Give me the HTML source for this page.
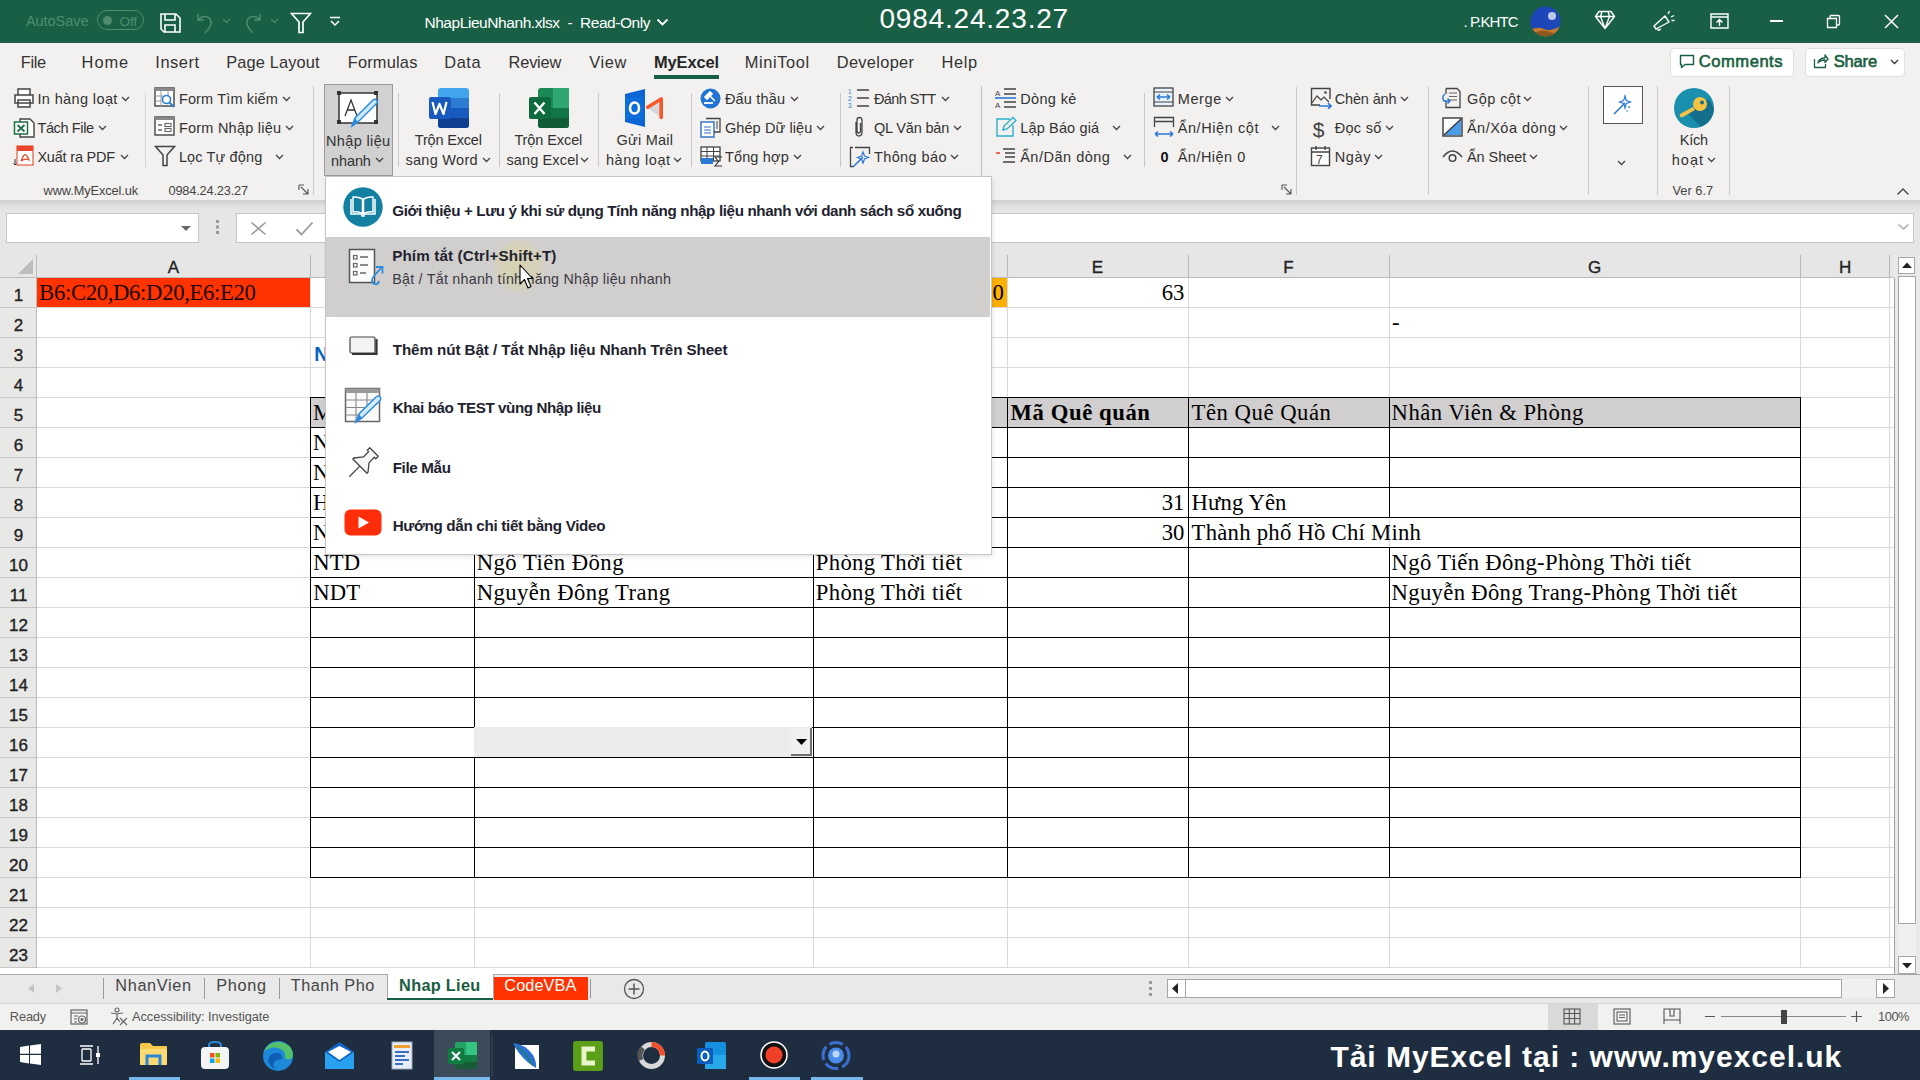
<!DOCTYPE html><html><head><meta charset="utf-8"><style>
html,body{margin:0;padding:0;width:1920px;height:1080px;overflow:hidden;background:#fff;}
body>div,body>svg{position:absolute;}
</style></head><body>
<div style="left:0px;top:0px;width:1920px;height:43px;background:#185f45;"></div>
<div style="left:0px;top:43px;width:1920px;height:157px;background:#f2f1ef;"></div>
<div style="left:0px;top:200px;width:1920px;height:55px;background:#e6e6e6;"></div>
<div style="left:0px;top:200px;width:1920px;height:11px;background:linear-gradient(#d0d0d0,#e2e2e2 60%,#e6e6e6);"></div>
<div style="left:0px;top:255px;width:1894px;height:22px;background:#e6e6e6;"></div>
<div style="left:0px;top:278px;width:36px;height:690px;background:#e8e8e7;"></div>
<div style="left:37px;top:278px;width:1857px;height:690px;background:#fff;"></div>
<div style="left:37px;top:307px;width:1857px;height:1px;background:#d9d9d9"></div>
<div style="left:0px;top:307px;width:36px;height:1px;background:#c8c8c8"></div>
<div style="left:37px;top:337px;width:1857px;height:1px;background:#d9d9d9"></div>
<div style="left:0px;top:337px;width:36px;height:1px;background:#c8c8c8"></div>
<div style="left:37px;top:367px;width:1857px;height:1px;background:#d9d9d9"></div>
<div style="left:0px;top:367px;width:36px;height:1px;background:#c8c8c8"></div>
<div style="left:37px;top:397px;width:1857px;height:1px;background:#d9d9d9"></div>
<div style="left:0px;top:397px;width:36px;height:1px;background:#c8c8c8"></div>
<div style="left:37px;top:427px;width:1857px;height:1px;background:#d9d9d9"></div>
<div style="left:0px;top:427px;width:36px;height:1px;background:#c8c8c8"></div>
<div style="left:37px;top:457px;width:1857px;height:1px;background:#d9d9d9"></div>
<div style="left:0px;top:457px;width:36px;height:1px;background:#c8c8c8"></div>
<div style="left:37px;top:487px;width:1857px;height:1px;background:#d9d9d9"></div>
<div style="left:0px;top:487px;width:36px;height:1px;background:#c8c8c8"></div>
<div style="left:37px;top:517px;width:1857px;height:1px;background:#d9d9d9"></div>
<div style="left:0px;top:517px;width:36px;height:1px;background:#c8c8c8"></div>
<div style="left:37px;top:547px;width:1857px;height:1px;background:#d9d9d9"></div>
<div style="left:0px;top:547px;width:36px;height:1px;background:#c8c8c8"></div>
<div style="left:37px;top:577px;width:1857px;height:1px;background:#d9d9d9"></div>
<div style="left:0px;top:577px;width:36px;height:1px;background:#c8c8c8"></div>
<div style="left:37px;top:607px;width:1857px;height:1px;background:#d9d9d9"></div>
<div style="left:0px;top:607px;width:36px;height:1px;background:#c8c8c8"></div>
<div style="left:37px;top:637px;width:1857px;height:1px;background:#d9d9d9"></div>
<div style="left:0px;top:637px;width:36px;height:1px;background:#c8c8c8"></div>
<div style="left:37px;top:667px;width:1857px;height:1px;background:#d9d9d9"></div>
<div style="left:0px;top:667px;width:36px;height:1px;background:#c8c8c8"></div>
<div style="left:37px;top:697px;width:1857px;height:1px;background:#d9d9d9"></div>
<div style="left:0px;top:697px;width:36px;height:1px;background:#c8c8c8"></div>
<div style="left:37px;top:727px;width:1857px;height:1px;background:#d9d9d9"></div>
<div style="left:0px;top:727px;width:36px;height:1px;background:#c8c8c8"></div>
<div style="left:37px;top:757px;width:1857px;height:1px;background:#d9d9d9"></div>
<div style="left:0px;top:757px;width:36px;height:1px;background:#c8c8c8"></div>
<div style="left:37px;top:787px;width:1857px;height:1px;background:#d9d9d9"></div>
<div style="left:0px;top:787px;width:36px;height:1px;background:#c8c8c8"></div>
<div style="left:37px;top:817px;width:1857px;height:1px;background:#d9d9d9"></div>
<div style="left:0px;top:817px;width:36px;height:1px;background:#c8c8c8"></div>
<div style="left:37px;top:847px;width:1857px;height:1px;background:#d9d9d9"></div>
<div style="left:0px;top:847px;width:36px;height:1px;background:#c8c8c8"></div>
<div style="left:37px;top:877px;width:1857px;height:1px;background:#d9d9d9"></div>
<div style="left:0px;top:877px;width:36px;height:1px;background:#c8c8c8"></div>
<div style="left:37px;top:907px;width:1857px;height:1px;background:#d9d9d9"></div>
<div style="left:0px;top:907px;width:36px;height:1px;background:#c8c8c8"></div>
<div style="left:37px;top:937px;width:1857px;height:1px;background:#d9d9d9"></div>
<div style="left:0px;top:937px;width:36px;height:1px;background:#c8c8c8"></div>
<div style="left:37px;top:967px;width:1857px;height:1px;background:#d9d9d9"></div>
<div style="left:0px;top:967px;width:36px;height:1px;background:#c8c8c8"></div>
<div style="left:310px;top:278px;width:1px;height:690px;background:#d9d9d9"></div>
<div style="left:474px;top:278px;width:1px;height:690px;background:#d9d9d9"></div>
<div style="left:813px;top:278px;width:1px;height:690px;background:#d9d9d9"></div>
<div style="left:1007px;top:278px;width:1px;height:690px;background:#d9d9d9"></div>
<div style="left:1188px;top:278px;width:1px;height:690px;background:#d9d9d9"></div>
<div style="left:1389px;top:278px;width:1px;height:690px;background:#d9d9d9"></div>
<div style="left:1800px;top:278px;width:1px;height:690px;background:#d9d9d9"></div>
<div style="left:1889px;top:278px;width:1px;height:690px;background:#d9d9d9"></div>
<div style="left:36px;top:255px;width:1px;height:713px;background:#bcbcbc;"></div>
<div style="left:0px;top:277px;width:1894px;height:1px;background:#bcbcbc;"></div>
<div style="left:310px;top:255px;width:1px;height:22px;background:#b8b8b8;"></div>
<div style="left:474px;top:255px;width:1px;height:22px;background:#b8b8b8;"></div>
<div style="left:813px;top:255px;width:1px;height:22px;background:#b8b8b8;"></div>
<div style="left:1007px;top:255px;width:1px;height:22px;background:#b8b8b8;"></div>
<div style="left:1188px;top:255px;width:1px;height:22px;background:#b8b8b8;"></div>
<div style="left:1389px;top:255px;width:1px;height:22px;background:#b8b8b8;"></div>
<div style="left:1800px;top:255px;width:1px;height:22px;background:#b8b8b8;"></div>
<div style="left:1889px;top:255px;width:1px;height:22px;background:#b8b8b8;"></div>
<div style="left:1894px;top:255px;width:26px;height:720px;background:#e9e9e9;"></div>
<div style="left:1894px;top:278px;width:1px;height:696px;background:#a0a0a0;"></div>
<div style="left:0px;top:968px;width:1894px;height:6px;background:#fff;"></div>
<div style="left:0px;top:974px;width:1920px;height:1px;background:#a6a6a6;"></div>
<div style="left:0px;top:975px;width:1920px;height:28px;background:#e9e9e9;"></div>
<div style="left:0px;top:1003px;width:1920px;height:1px;background:#d6d6d6;"></div>
<div style="left:0px;top:1004px;width:1920px;height:26px;background:#f1f1ef;"></div>
<div style="left:0px;top:1030px;width:1920px;height:50px;background:#1e2e40;"></div>
<div style="left:25.9px;top:13.7px;font-family:'Liberation Sans', sans-serif;font-size:14.5px;line-height:14.5px;color:#4f8d6e;font-weight:normal;white-space:nowrap;letter-spacing:-0.03px;">AutoSave</div>
<div style="left:97px;top:10px;width:45px;height:18px;border:1px solid #4f8d6e;border-radius:10px;"></div>
<div style="left:103px;top:16px;width:9px;height:9px;border-radius:50%;background:#4f8d6e;"></div>
<div style="left:119.5px;top:14.6px;font-family:'Liberation Sans', sans-serif;font-size:13.5px;line-height:13.5px;color:#4f8d6e;font-weight:normal;white-space:nowrap;letter-spacing:-0.09px;">Off</div>
<svg style="position:absolute;left:160px;top:13px;" width="21" height="20" viewBox="0 0 21 20"><path d="M1 1H16L20 5V19H4L1 16Z M5 1V7H15V1 M5 19V12H15V19" fill="none" stroke="#fff" stroke-width="1.6"/></svg>
<svg style="position:absolute;left:195px;top:12px;" width="20" height="22" viewBox="0 0 20 22"><path d="M3 2V8H9 M3.5 8C6 4 12 3 15 7C18 11 15 16 10 21" fill="none" stroke="#4f8d6e" stroke-width="1.5"/></svg>
<svg style="position:absolute;left:222px;top:18px;" width="9" height="6" viewBox="0 0 9 6"><path d="M1 1L4.5 4.5L8 1" fill="none" stroke="#4f8d6e" stroke-width="1.2"/></svg>
<svg style="position:absolute;left:243px;top:12px;" width="20" height="22" viewBox="0 0 20 22"><path d="M17 2V8H11 M16.5 8C14 4 8 3 5 7C2 11 5 16 10 21" fill="none" stroke="#4f8d6e" stroke-width="1.5"/></svg>
<svg style="position:absolute;left:270px;top:18px;" width="9" height="6" viewBox="0 0 9 6"><path d="M1 1L4.5 4.5L8 1" fill="none" stroke="#4f8d6e" stroke-width="1.2"/></svg>
<svg style="position:absolute;left:290px;top:12px;" width="22" height="22" viewBox="0 0 22 22"><path d="M1.5 1.5H20.5L13 10V20.5H9V10Z" fill="none" stroke="#fff" stroke-width="1.7"/></svg>
<svg style="position:absolute;left:329px;top:16px;" width="12" height="11" viewBox="0 0 12 11"><path d="M1 1.5H11 M2 5L6 9L10 5" fill="none" stroke="#fff" stroke-width="1.5"/></svg>
<div style="left:424.4px;top:15.3px;font-family:'Liberation Sans', sans-serif;font-size:15.5px;line-height:15.5px;color:#fff;font-weight:normal;white-space:nowrap;letter-spacing:-0.43px;white-space:pre;">NhapLieuNhanh.xlsx  -  Read-Only</div>
<svg style="position:absolute;left:656px;top:18px;" width="13" height="8" viewBox="0 0 13 8"><path d="M1.5 1.5L6.5 6.5L11.5 1.5" fill="none" stroke="#fff" stroke-width="1.8"/></svg>
<div style="left:879.4px;top:4.7px;font-family:'Liberation Sans', sans-serif;font-size:28px;line-height:28px;color:#fff;font-weight:normal;white-space:nowrap;letter-spacing:0.81px;">0984.24.23.27</div>
<div style="left:1463.4px;top:14.1px;font-family:'Liberation Sans', sans-serif;font-size:15px;line-height:15px;color:#fff;font-weight:normal;white-space:nowrap;letter-spacing:-0.89px;">. P.KHTC</div>
<svg style="position:absolute;left:1530px;top:6px;" width="31" height="31" viewBox="0 0 31 31"><defs><clipPath id="avc"><circle cx="15.5" cy="15.5" r="15"/></clipPath></defs><g clip-path="url(#avc)"><rect width="31" height="31" fill="#1d47b8"/><path d="M0 24Q8 20 14 23T31 20V31H0Z" fill="#c77a2a"/><path d="M4 27Q12 23 20 26T31 25V31H4Z" fill="#8a5a1e"/></g><circle cx="22" cy="10" r="4" fill="#b9c9e8"/></svg>
<svg style="position:absolute;left:1594px;top:10px;" width="22" height="20" viewBox="0 0 22 20"><path d="M5 1.5H17L20.5 6.5L11 18.5L1.5 6.5Z M1.5 6.5H20.5 M8 1.5L6.5 6.5L11 18.5L15.5 6.5L14 1.5" fill="none" stroke="#fff" stroke-width="1.4" stroke-linejoin="round"/></svg>
<svg style="position:absolute;left:1652px;top:9px;" width="23" height="22" viewBox="0 0 23 22"><path d="M2 17L13 7L17 13L4 20Z M5 19L6.5 21.5L9 20" fill="none" stroke="#fff" stroke-width="1.4" stroke-linejoin="round"/><path d="M16 5L17.5 2 M19 8L22 6.5 M19.5 11.5L22.5 11.5" stroke="#fff" stroke-width="1.3"/></svg>
<svg style="position:absolute;left:1710px;top:13px;" width="19" height="16" viewBox="0 0 19 16"><path d="M1 1H18V15H1Z M1 4H18 M9.5 13V6.5 M6.5 9.5L9.5 6.5L12.5 9.5" fill="none" stroke="#fff" stroke-width="1.4"/></svg>
<div style="left:1770px;top:20px;width:13px;height:1.5px;background:#fff;"></div>
<svg style="position:absolute;left:1826px;top:14px;" width="15" height="15" viewBox="0 0 15 15"><path d="M1.5 4.5H10.5V13.5H1.5Z M4 4.5V2.5Q4 1.5 5 1.5H12.5Q13.5 1.5 13.5 2.5V10Q13.5 11 12.5 11H10.5" fill="none" stroke="#fff" stroke-width="1.3"/></svg>
<svg style="position:absolute;left:1884px;top:14px;" width="15" height="15" viewBox="0 0 15 15"><path d="M1 1L14 14 M14 1L1 14" fill="none" stroke="#fff" stroke-width="1.5"/></svg>
<div style="left:20.7px;top:54.1px;font-family:'Liberation Sans', sans-serif;font-size:16.4px;line-height:16.4px;color:#333;font-weight:normal;white-space:nowrap;letter-spacing:-0.30px;">File</div>
<div style="left:81.6px;top:54.1px;font-family:'Liberation Sans', sans-serif;font-size:16.4px;line-height:16.4px;color:#333;font-weight:normal;white-space:nowrap;letter-spacing:0.96px;">Home</div>
<div style="left:155.3px;top:54.1px;font-family:'Liberation Sans', sans-serif;font-size:16.4px;line-height:16.4px;color:#333;font-weight:normal;white-space:nowrap;letter-spacing:0.54px;">Insert</div>
<div style="left:226.3px;top:54.1px;font-family:'Liberation Sans', sans-serif;font-size:16.4px;line-height:16.4px;color:#333;font-weight:normal;white-space:nowrap;letter-spacing:0.13px;">Page Layout</div>
<div style="left:347.7px;top:54.1px;font-family:'Liberation Sans', sans-serif;font-size:16.4px;line-height:16.4px;color:#333;font-weight:normal;white-space:nowrap;letter-spacing:0.19px;">Formulas</div>
<div style="left:444.3px;top:54.1px;font-family:'Liberation Sans', sans-serif;font-size:16.4px;line-height:16.4px;color:#333;font-weight:normal;white-space:nowrap;letter-spacing:0.56px;">Data</div>
<div style="left:508.6px;top:54.1px;font-family:'Liberation Sans', sans-serif;font-size:16.4px;line-height:16.4px;color:#333;font-weight:normal;white-space:nowrap;letter-spacing:-0.21px;">Review</div>
<div style="left:589.3px;top:54.1px;font-family:'Liberation Sans', sans-serif;font-size:16.4px;line-height:16.4px;color:#333;font-weight:normal;white-space:nowrap;letter-spacing:0.59px;">View</div>
<div style="left:744.7px;top:54.1px;font-family:'Liberation Sans', sans-serif;font-size:16.4px;line-height:16.4px;color:#333;font-weight:normal;white-space:nowrap;letter-spacing:0.61px;">MiniTool</div>
<div style="left:836.8px;top:54.1px;font-family:'Liberation Sans', sans-serif;font-size:16.4px;line-height:16.4px;color:#333;font-weight:normal;white-space:nowrap;letter-spacing:0.31px;">Developer</div>
<div style="left:941.6px;top:54.1px;font-family:'Liberation Sans', sans-serif;font-size:16.4px;line-height:16.4px;color:#333;font-weight:normal;white-space:nowrap;letter-spacing:0.60px;">Help</div>
<div style="left:654.0px;top:54.1px;font-family:'Liberation Sans', sans-serif;font-size:16.4px;line-height:16.4px;color:#262626;font-weight:bold;white-space:nowrap;letter-spacing:-0.10px;">MyExcel</div>
<div style="left:654px;top:75px;width:65px;height:4px;background:#185f45;"></div>
<div style="left:1670px;top:48px;width:122px;height:27px;background:#fff;border:1px solid #e0e0e0;border-radius:4px;"></div>
<div style="left:1805px;top:48px;width:98px;height:27px;background:#fff;border:1px solid #e0e0e0;border-radius:4px;"></div>
<svg style="position:absolute;left:1679px;top:54px;" width="16" height="15" viewBox="0 0 16 15"><path d="M1.5 1.5H14.5V10.5H6L2.5 13.5V10.5H1.5Z" fill="none" stroke="#185f45" stroke-width="1.4" stroke-linejoin="round"/></svg>
<div style="left:1698.8px;top:53.7px;font-family:'Liberation Sans', sans-serif;font-size:16.6px;line-height:16.6px;color:#1a5e40;font-weight:normal;white-space:nowrap;letter-spacing:0.50px;-webkit-text-stroke:0.6px #1a5e40;">Comments</div>
<svg style="position:absolute;left:1813px;top:53px;" width="16" height="16" viewBox="0 0 16 16"><path d="M1.5 6V14.5H12.5V11 M5 10Q6 5 12 5V2L15 6L12 9.5V7Q7 7 5 10Z" fill="none" stroke="#185f45" stroke-width="1.3" stroke-linejoin="round"/></svg>
<div style="left:1833.8px;top:53.7px;font-family:'Liberation Sans', sans-serif;font-size:16.6px;line-height:16.6px;color:#1a5e40;font-weight:normal;white-space:nowrap;letter-spacing:-0.24px;-webkit-text-stroke:0.6px #1a5e40;">Share</div>
<svg style="position:absolute;left:1890px;top:59px;" width="9" height="6" viewBox="0 0 9 6"><path d="M1 1L4.5 4.5L8 1" fill="none" stroke="#333" stroke-width="1.3"/></svg>
<svg style="position:absolute;left:13px;top:87px;" width="22" height="21" viewBox="0 0 22 21"><path d="M5 8V2H17V8 M2 8H20V16H2Z M5 13H17V20H5Z" fill="#fff" stroke="#444" stroke-width="1.5"/></svg>
<div style="left:37.4px;top:92.2px;font-family:'Liberation Sans', sans-serif;font-size:14.5px;line-height:14.5px;color:#333333;font-weight:normal;white-space:nowrap;letter-spacing:0.38px;">In hàng loạt</div>
<svg style="position:absolute;left:121px;top:95.5px;" width="9" height="6" viewBox="0 0 9 6"><path d="M1 1L4.5 4.5L8 1" fill="none" stroke="#444" stroke-width="1.3"/></svg>
<svg style="position:absolute;left:13px;top:116px;" width="22" height="22" viewBox="0 0 22 22"><path d="M7 3H17L21 7V21H7Z" fill="#fff" stroke="#444" stroke-width="1.4"/><rect x="1.5" y="6" width="13" height="12" fill="#fff" stroke="#1e7145" stroke-width="1.5"/><path d="M4.5 9L11.5 15.5M11.5 9L4.5 15.5" stroke="#1e7145" stroke-width="1.8"/></svg>
<div style="left:37.4px;top:121.2px;font-family:'Liberation Sans', sans-serif;font-size:14.5px;line-height:14.5px;color:#333333;font-weight:normal;white-space:nowrap;letter-spacing:-0.36px;">Tách File</div>
<svg style="position:absolute;left:98px;top:124.5px;" width="9" height="6" viewBox="0 0 9 6"><path d="M1 1L4.5 4.5L8 1" fill="none" stroke="#444" stroke-width="1.3"/></svg>
<svg style="position:absolute;left:12px;top:145px;" width="23" height="23" viewBox="0 0 23 23"><rect x="5" y="1" width="16" height="19" fill="#fff" stroke="#e25a3b" stroke-width="1.2"/><rect x="5" y="1" width="16" height="5" fill="#e8452a"/><path d="M9 16Q12 8 14 10T17 15Q13 13 9 16" fill="none" stroke="#e8452a" stroke-width="1.2"/><path d="M3 14V20L1.5 18.5M3 20L4.5 18.5" stroke="#333" fill="none" stroke-width="1"/></svg>
<div style="left:37.4px;top:150.2px;font-family:'Liberation Sans', sans-serif;font-size:14.5px;line-height:14.5px;color:#333333;font-weight:normal;white-space:nowrap;letter-spacing:-0.20px;">Xuất ra PDF</div>
<svg style="position:absolute;left:120px;top:153.5px;" width="9" height="6" viewBox="0 0 9 6"><path d="M1 1L4.5 4.5L8 1" fill="none" stroke="#444" stroke-width="1.3"/></svg>
<div style="left:145px;top:93px;width:1px;height:74px;background:#d4d4d4;"></div>
<svg style="position:absolute;left:154px;top:87px;" width="22" height="21" viewBox="0 0 22 21"><rect x="1" y="1" width="19" height="18" fill="#fff" stroke="#444" stroke-width="1.4"/><rect x="1" y="1" width="19" height="3" fill="#888"/><path d="M1 9H9M1 14H7M7 4V19M14 4V8" stroke="#999" stroke-width="1"/><circle cx="12.5" cy="12.5" r="4" fill="#fff" stroke="#2a7fd4" stroke-width="1.6"/><path d="M15.5 15.5L20 20" stroke="#2a7fd4" stroke-width="1.8"/></svg>
<div style="left:178.9px;top:92.2px;font-family:'Liberation Sans', sans-serif;font-size:14.5px;line-height:14.5px;color:#333333;font-weight:normal;white-space:nowrap;letter-spacing:0.15px;">Form Tìm kiếm</div>
<svg style="position:absolute;left:282px;top:95.5px;" width="9" height="6" viewBox="0 0 9 6"><path d="M1 1L4.5 4.5L8 1" fill="none" stroke="#444" stroke-width="1.3"/></svg>
<svg style="position:absolute;left:154px;top:116px;" width="22" height="21" viewBox="0 0 22 21"><rect x="1" y="1" width="19" height="18" fill="#fff" stroke="#444" stroke-width="1.4"/><rect x="1" y="1" width="19" height="3" fill="#888"/><path d="M4 9H8M4 14H8" stroke="#666" stroke-width="1.3"/><rect x="11" y="7.5" width="6" height="3" fill="none" stroke="#666" stroke-width="1.1"/><rect x="11" y="12.5" width="6" height="3" fill="none" stroke="#666" stroke-width="1.1"/></svg>
<div style="left:178.9px;top:121.2px;font-family:'Liberation Sans', sans-serif;font-size:14.5px;line-height:14.5px;color:#333333;font-weight:normal;white-space:nowrap;letter-spacing:0.23px;">Form Nhập liệu</div>
<svg style="position:absolute;left:285px;top:124.5px;" width="9" height="6" viewBox="0 0 9 6"><path d="M1 1L4.5 4.5L8 1" fill="none" stroke="#444" stroke-width="1.3"/></svg>
<svg style="position:absolute;left:154px;top:145px;" width="22" height="22" viewBox="0 0 22 22"><path d="M1.5 1.5H20.5L13 10V20.5H9V10Z" fill="none" stroke="#444" stroke-width="1.5"/></svg>
<div style="left:178.9px;top:150.2px;font-family:'Liberation Sans', sans-serif;font-size:14.5px;line-height:14.5px;color:#333333;font-weight:normal;white-space:nowrap;letter-spacing:0.14px;">Lọc Tự động</div>
<svg style="position:absolute;left:275px;top:153.5px;" width="9" height="6" viewBox="0 0 9 6"><path d="M1 1L4.5 4.5L8 1" fill="none" stroke="#444" stroke-width="1.3"/></svg>
<div style="left:43.5px;top:184.7px;font-family:'Liberation Sans', sans-serif;font-size:12.8px;line-height:12.8px;color:#444;font-weight:normal;white-space:nowrap;letter-spacing:-0.11px;">www.MyExcel.uk</div>
<div style="left:168.5px;top:184.7px;font-family:'Liberation Sans', sans-serif;font-size:12.8px;line-height:12.8px;color:#444;font-weight:normal;white-space:nowrap;letter-spacing:-0.18px;">0984.24.23.27</div>
<svg style="position:absolute;left:298px;top:184px;" width="12" height="12" viewBox="0 0 12 12"><path d="M1 1H6M1 1V6 M3 3L10 10 M10 5V10H5" fill="none" stroke="#555" stroke-width="1.1"/></svg>
<div style="left:313px;top:86px;width:1px;height:109px;background:#c8c8c8;"></div>
<div style="left:324px;top:84px;width:67px;height:90px;background:#d1d1d1;border:1px solid #9a9a9a;"></div>
<svg style="position:absolute;left:337px;top:91px;" width="42" height="38" viewBox="0 0 42 38"><rect x="2" y="2" width="38" height="30" fill="#fff" stroke="#333" stroke-width="1.5"/><g fill="#333"><rect x="0" y="0" width="4" height="4"/><rect x="37" y="0" width="4" height="4"/><rect x="0" y="29" width="4" height="4"/><rect x="37" y="29" width="4" height="4"/></g><path d="M8 25L14 9L20 25 M10.5 19H17.5" fill="none" stroke="#333" stroke-width="1.3"/><path d="M15 35L18 27L36 9Q39 7 40 10Q41 12 39 13L21 31Z" fill="#cfe8fb" stroke="#2b8ae2" stroke-width="1.5"/><path d="M15 35L18 27L21 31Z" fill="#2b8ae2"/></svg>
<div style="left:326.0px;top:134.2px;font-family:'Liberation Sans', sans-serif;font-size:14.5px;line-height:14.5px;color:#333333;font-weight:normal;white-space:nowrap;letter-spacing:0.36px;">Nhập liệu</div>
<div style="left:331.1px;top:153.7px;font-family:'Liberation Sans', sans-serif;font-size:14.5px;line-height:14.5px;color:#333333;font-weight:normal;white-space:nowrap;letter-spacing:-0.12px;">nhanh</div>
<svg style="position:absolute;left:375px;top:156.5px;" width="9" height="6" viewBox="0 0 9 6"><path d="M1 1L4.5 4.5L8 1" fill="none" stroke="#444" stroke-width="1.3"/></svg>
<div style="left:398px;top:93px;width:1px;height:74px;background:#c8c8c8;"></div>
<svg style="position:absolute;left:428px;top:87px;" width="42" height="42" viewBox="0 0 42 42"><rect x="10" y="1" width="31" height="40" rx="3" fill="#41a5ee"/><rect x="10" y="11" width="31" height="10" fill="#2b7cd3"/><rect x="10" y="21" width="31" height="10" fill="#185abd"/><path d="M10 31H41V38Q41 41 38 41H13Q10 41 10 38Z" fill="#103f91"/><rect x="1" y="10" width="22" height="22" rx="2" fill="#185abd"/><path d="M4.5 15L7.5 27L11.5 17L15.5 27L18.5 15" fill="none" stroke="#fff" stroke-width="2.2" stroke-linejoin="round"/></svg>
<div style="left:414.8px;top:133.2px;font-family:'Liberation Sans', sans-serif;font-size:14.5px;line-height:14.5px;color:#333333;font-weight:normal;white-space:nowrap;letter-spacing:-0.18px;">Trộn Excel</div>
<div style="left:405.4px;top:152.9px;font-family:'Liberation Sans', sans-serif;font-size:14.5px;line-height:14.5px;color:#333333;font-weight:normal;white-space:nowrap;letter-spacing:0.29px;">sang Word</div>
<svg style="position:absolute;left:482px;top:156.5px;" width="9" height="6" viewBox="0 0 9 6"><path d="M1 1L4.5 4.5L8 1" fill="none" stroke="#444" stroke-width="1.3"/></svg>
<div style="left:499px;top:93px;width:1px;height:74px;background:#c8c8c8;"></div>
<svg style="position:absolute;left:528px;top:87px;" width="42" height="42" viewBox="0 0 42 42"><rect x="10" y="1" width="31" height="40" rx="3" fill="#1b8a56"/><rect x="25" y="1" width="16" height="20" fill="#2ea773"/><rect x="10" y="21" width="31" height="10" fill="#127746"/><path d="M10 31H41V38Q41 41 38 41H13Q10 41 10 38Z" fill="#0f5c37"/><rect x="1" y="10" width="22" height="22" rx="2" fill="#0e6b3e"/><path d="M6.5 15.5L16.5 27M16.5 15.5L6.5 27" stroke="#fff" stroke-width="2.4"/></svg>
<div style="left:514.4px;top:133.2px;font-family:'Liberation Sans', sans-serif;font-size:14.5px;line-height:14.5px;color:#333333;font-weight:normal;white-space:nowrap;letter-spacing:-0.09px;">Trộn Excel</div>
<div style="left:506.4px;top:152.9px;font-family:'Liberation Sans', sans-serif;font-size:14.5px;line-height:14.5px;color:#333333;font-weight:normal;white-space:nowrap;letter-spacing:0.14px;">sang Excel</div>
<svg style="position:absolute;left:580px;top:156.5px;" width="9" height="6" viewBox="0 0 9 6"><path d="M1 1L4.5 4.5L8 1" fill="none" stroke="#444" stroke-width="1.3"/></svg>
<div style="left:598px;top:93px;width:1px;height:74px;background:#c8c8c8;"></div>
<svg style="position:absolute;left:624px;top:88px;" width="44" height="40" viewBox="0 0 44 40"><path d="M1 6L21 1V39L1 34Z" fill="#0a64d6"/><rect x="1" y="9" width="19" height="22" fill="#0f6cdb"/><ellipse cx="10.5" cy="20" rx="4.5" ry="5.5" fill="none" stroke="#fff" stroke-width="2.6"/><path d="M24.4 20.5L36.5 15L36.5 29Z" fill="#d4d6da"/><path d="M23.7 19.3L37.2 11V29.5" fill="none" stroke="#f5582a" stroke-width="3.6" stroke-linejoin="round" stroke-linecap="round"/></svg>
<div style="left:616.4px;top:133.2px;font-family:'Liberation Sans', sans-serif;font-size:14.5px;line-height:14.5px;color:#333333;font-weight:normal;white-space:nowrap;letter-spacing:0.26px;">Gửi Mail</div>
<div style="left:605.9px;top:152.9px;font-family:'Liberation Sans', sans-serif;font-size:14.5px;line-height:14.5px;color:#333333;font-weight:normal;white-space:nowrap;letter-spacing:0.56px;">hàng loạt</div>
<svg style="position:absolute;left:673px;top:156.5px;" width="9" height="6" viewBox="0 0 9 6"><path d="M1 1L4.5 4.5L8 1" fill="none" stroke="#444" stroke-width="1.3"/></svg>
<div style="left:691px;top:93px;width:1px;height:74px;background:#c8c8c8;"></div>
<svg style="position:absolute;left:700px;top:88px;" width="21" height="21" viewBox="0 0 21 21"><circle cx="10.5" cy="10.5" r="10" fill="#1f74d4"/><path d="M5 9L10 4L12 6L7 11Z M9 7L15 13" stroke="#fff" stroke-width="1.6" fill="#fff"/><path d="M4 15H13" stroke="#fff" stroke-width="1.8"/></svg>
<div style="left:724.9px;top:92.2px;font-family:'Liberation Sans', sans-serif;font-size:14.5px;line-height:14.5px;color:#333333;font-weight:normal;white-space:nowrap;letter-spacing:0.19px;">Đấu thầu</div>
<svg style="position:absolute;left:790px;top:95.5px;" width="9" height="6" viewBox="0 0 9 6"><path d="M1 1L4.5 4.5L8 1" fill="none" stroke="#444" stroke-width="1.3"/></svg>
<svg style="position:absolute;left:700px;top:117px;" width="22" height="21" viewBox="0 0 22 21"><rect x="1" y="5" width="13" height="15" fill="#fff" stroke="#2a6fc4" stroke-width="1.4"/><path d="M6 1.5H20V15H14" fill="none" stroke="#444" stroke-width="1.3"/><path d="M4 10H11M4 13H11M4 16H11" stroke="#2a6fc4" stroke-width="1.1"/><path d="M17 4V12" stroke="#444" stroke-width="1"/></svg>
<div style="left:724.9px;top:121.2px;font-family:'Liberation Sans', sans-serif;font-size:14.5px;line-height:14.5px;color:#333333;font-weight:normal;white-space:nowrap;letter-spacing:0.10px;">Ghép Dữ liệu</div>
<svg style="position:absolute;left:816px;top:124.5px;" width="9" height="6" viewBox="0 0 9 6"><path d="M1 1L4.5 4.5L8 1" fill="none" stroke="#444" stroke-width="1.3"/></svg>
<svg style="position:absolute;left:700px;top:146px;" width="23" height="21" viewBox="0 0 23 21"><rect x="1" y="1" width="19" height="14" fill="#fff" stroke="#444" stroke-width="1.3"/><path d="M1 5.5H20M1 10H20M7 1V15M13.5 1V15" stroke="#444" stroke-width="1"/><rect x="1" y="12" width="12" height="6" fill="#2a7ad4"/><path d="M22 11H15L18.5 15.5L15 20H22" fill="none" stroke="#333" stroke-width="1.1"/></svg>
<div style="left:724.9px;top:150.2px;font-family:'Liberation Sans', sans-serif;font-size:14.5px;line-height:14.5px;color:#333333;font-weight:normal;white-space:nowrap;letter-spacing:0.16px;">Tổng hợp</div>
<svg style="position:absolute;left:793px;top:153.5px;" width="9" height="6" viewBox="0 0 9 6"><path d="M1 1L4.5 4.5L8 1" fill="none" stroke="#444" stroke-width="1.3"/></svg>
<div style="left:840px;top:93px;width:1px;height:74px;background:#c8c8c8;"></div>
<svg style="position:absolute;left:848px;top:87px;" width="22" height="22" viewBox="0 0 22 22"><path d="M9 3H21M9 11H21M9 19H21" stroke="#444" stroke-width="1.6"/><text x="0" y="7" font-size="6.5" fill="#2a7ad4" font-family="Liberation Sans">1</text><text x="0" y="14" font-size="6.5" fill="#2a7ad4" font-family="Liberation Sans">2</text><text x="0" y="21" font-size="6.5" fill="#2a7ad4" font-family="Liberation Sans">3</text></svg>
<div style="left:873.9px;top:92.2px;font-family:'Liberation Sans', sans-serif;font-size:14.5px;line-height:14.5px;color:#333333;font-weight:normal;white-space:nowrap;letter-spacing:-0.56px;">Đánh STT</div>
<svg style="position:absolute;left:941px;top:95.5px;" width="9" height="6" viewBox="0 0 9 6"><path d="M1 1L4.5 4.5L8 1" fill="none" stroke="#444" stroke-width="1.3"/></svg>
<svg style="position:absolute;left:852px;top:116px;" width="14" height="22" viewBox="0 0 14 22"><path d="M4 6V16Q4 20 7 20Q10 20 10 16V4Q10 1.5 7.5 1.5Q5 1.5 5 4V15Q5 17 7 17Q8.5 17 8.5 15V7" fill="none" stroke="#444" stroke-width="1.3"/></svg>
<div style="left:873.9px;top:121.2px;font-family:'Liberation Sans', sans-serif;font-size:14.5px;line-height:14.5px;color:#333333;font-weight:normal;white-space:nowrap;letter-spacing:-0.16px;">QL Văn bản</div>
<svg style="position:absolute;left:953px;top:124.5px;" width="9" height="6" viewBox="0 0 9 6"><path d="M1 1L4.5 4.5L8 1" fill="none" stroke="#444" stroke-width="1.3"/></svg>
<svg style="position:absolute;left:849px;top:146px;" width="22" height="22" viewBox="0 0 22 22"><path d="M4 1.5H1.5V20.5H4 M6 1.5H20.5V8" fill="none" stroke="#444" stroke-width="1.3"/><path d="M4 21L14 11" stroke="#2a7ad4" stroke-width="1.6"/><path d="M14 6L15.5 10L19.5 11.5L15.5 13L14 17L12.5 13L8.5 11.5L12.5 10Z" fill="none" stroke="#2a7ad4" stroke-width="1.2"/></svg>
<div style="left:873.9px;top:150.2px;font-family:'Liberation Sans', sans-serif;font-size:14.5px;line-height:14.5px;color:#333333;font-weight:normal;white-space:nowrap;letter-spacing:0.41px;">Thông báo</div>
<svg style="position:absolute;left:950px;top:153.5px;" width="9" height="6" viewBox="0 0 9 6"><path d="M1 1L4.5 4.5L8 1" fill="none" stroke="#444" stroke-width="1.3"/></svg>
<div style="left:981px;top:86px;width:1px;height:90px;background:#c0c0c0;"></div>
<svg style="position:absolute;left:995px;top:87px;" width="22" height="22" viewBox="0 0 22 22"><text x="0" y="9" font-size="8" fill="#444" font-family="Liberation Sans">A</text><text x="0" y="21" font-size="8" fill="#444" font-family="Liberation Sans">A</text><path d="M9 2H21M9 7H21M9 15H21M9 20H21" stroke="#444" stroke-width="1.4"/><path d="M0 11H21" stroke="#2a7ad4" stroke-width="1.6"/></svg>
<div style="left:1020.2px;top:92.2px;font-family:'Liberation Sans', sans-serif;font-size:14.5px;line-height:14.5px;color:#333333;font-weight:normal;white-space:nowrap;letter-spacing:0.36px;">Dòng kẻ</div>
<svg style="position:absolute;left:995px;top:116px;" width="22" height="22" viewBox="0 0 22 22"><path d="M15 3H2V20H18V9" fill="none" stroke="#2ab0c8" stroke-width="1.4"/><path d="M8 14L9 10L18 1.5L21 4.5L12 13Z" fill="none" stroke="#2ab0c8" stroke-width="1.3"/></svg>
<div style="left:1020.2px;top:121.2px;font-family:'Liberation Sans', sans-serif;font-size:14.5px;line-height:14.5px;color:#333333;font-weight:normal;white-space:nowrap;letter-spacing:0.16px;">Lập Báo giá</div>
<svg style="position:absolute;left:1112px;top:124.5px;" width="9" height="6" viewBox="0 0 9 6"><path d="M1 1L4.5 4.5L8 1" fill="none" stroke="#444" stroke-width="1.3"/></svg>
<svg style="position:absolute;left:995px;top:147px;" width="22" height="18" viewBox="0 0 22 18"><path d="M1 6H5" stroke="#e8453c" stroke-width="1.6"/><path d="M8 2H20M10 6H20M10 10H20M8 15H20" stroke="#444" stroke-width="1.5"/></svg>
<div style="left:1020.2px;top:150.2px;font-family:'Liberation Sans', sans-serif;font-size:14.5px;line-height:14.5px;color:#333333;font-weight:normal;white-space:nowrap;letter-spacing:0.51px;">Ẩn/Dãn dòng</div>
<svg style="position:absolute;left:1123px;top:153.5px;" width="9" height="6" viewBox="0 0 9 6"><path d="M1 1L4.5 4.5L8 1" fill="none" stroke="#444" stroke-width="1.3"/></svg>
<div style="left:1144px;top:93px;width:1px;height:74px;background:#c8c8c8;"></div>
<svg style="position:absolute;left:1153px;top:87px;" width="21" height="20" viewBox="0 0 21 20"><rect x="1" y="1" width="19" height="18" fill="#e8f2fc" stroke="#444" stroke-width="1.3"/><path d="M1 5H20M1 15H20" stroke="#444" stroke-width="1.1"/><path d="M4 10H17M4 10L7 7.5M4 10L7 12.5M17 10L14 7.5M17 10L14 12.5" fill="none" stroke="#2a7ad4" stroke-width="1.4"/></svg>
<div style="left:1177.7px;top:92.2px;font-family:'Liberation Sans', sans-serif;font-size:14.5px;line-height:14.5px;color:#333333;font-weight:normal;white-space:nowrap;letter-spacing:0.61px;">Merge</div>
<svg style="position:absolute;left:1225px;top:95.5px;" width="9" height="6" viewBox="0 0 9 6"><path d="M1 1L4.5 4.5L8 1" fill="none" stroke="#444" stroke-width="1.3"/></svg>
<svg style="position:absolute;left:1153px;top:116px;" width="22" height="22" viewBox="0 0 22 22"><path d="M1.5 11V1.5H20.5V11 M1.5 5.5H20.5" fill="none" stroke="#444" stroke-width="1.3"/><path d="M2 18H20M2 18L5 15.5M2 18L5 20.5M20 18L17 15.5M20 18L17 20.5" fill="none" stroke="#2a7ad4" stroke-width="1.6"/></svg>
<div style="left:1177.7px;top:121.2px;font-family:'Liberation Sans', sans-serif;font-size:14.5px;line-height:14.5px;color:#333333;font-weight:normal;white-space:nowrap;letter-spacing:0.59px;">Ẩn/Hiện cột</div>
<svg style="position:absolute;left:1271px;top:124.5px;" width="9" height="6" viewBox="0 0 9 6"><path d="M1 1L4.5 4.5L8 1" fill="none" stroke="#444" stroke-width="1.3"/></svg>
<div style="left:1160.4px;top:150.2px;font-family:'Liberation Sans', sans-serif;font-size:14.5px;line-height:14.5px;color:#111;font-weight:bold;white-space:nowrap;">0</div>
<div style="left:1177.7px;top:150.2px;font-family:'Liberation Sans', sans-serif;font-size:14.5px;line-height:14.5px;color:#333333;font-weight:normal;white-space:nowrap;letter-spacing:0.48px;">Ẩn/Hiện 0</div>
<svg style="position:absolute;left:1281px;top:184px;" width="12" height="12" viewBox="0 0 12 12"><path d="M1 1H6M1 1V6 M3 3L10 10 M10 5V10H5" fill="none" stroke="#555" stroke-width="1.1"/></svg>
<div style="left:1296px;top:87px;width:1px;height:108px;background:#c8c8c8;"></div>
<svg style="position:absolute;left:1310px;top:87px;" width="22" height="22" viewBox="0 0 22 22"><path d="M20 12V1.5H1.5V18H10" fill="none" stroke="#444" stroke-width="1.4"/><path d="M2 16L7 9L11 13L14 10L19 15" fill="none" stroke="#444" stroke-width="1.2"/><circle cx="15.5" cy="5.5" r="1.3" fill="#444"/><path d="M9 19H21M18 16L21 19L18 22" fill="none" stroke="#2a7ad4" stroke-width="1.6"/></svg>
<div style="left:1334.7px;top:92.2px;font-family:'Liberation Sans', sans-serif;font-size:14.5px;line-height:14.5px;color:#333333;font-weight:normal;white-space:nowrap;letter-spacing:-0.15px;">Chèn ảnh</div>
<svg style="position:absolute;left:1400px;top:95.5px;" width="9" height="6" viewBox="0 0 9 6"><path d="M1 1L4.5 4.5L8 1" fill="none" stroke="#444" stroke-width="1.3"/></svg>
<div style="left:1312.7px;top:118.7px;font-family:'Liberation Sans', sans-serif;font-size:21px;line-height:21px;color:#444;font-weight:normal;white-space:nowrap;">$</div>
<div style="left:1334.7px;top:121.2px;font-family:'Liberation Sans', sans-serif;font-size:14.5px;line-height:14.5px;color:#333333;font-weight:normal;white-space:nowrap;letter-spacing:0.30px;">Đọc số</div>
<svg style="position:absolute;left:1385px;top:124.5px;" width="9" height="6" viewBox="0 0 9 6"><path d="M1 1L4.5 4.5L8 1" fill="none" stroke="#444" stroke-width="1.3"/></svg>
<svg style="position:absolute;left:1310px;top:145px;" width="21" height="22" viewBox="0 0 21 22"><rect x="1.5" y="3" width="18" height="17.5" fill="#fff" stroke="#444" stroke-width="1.4"/><path d="M1.5 7H19.5 M6 1V5 M15 1V5" stroke="#444" stroke-width="1.4"/><text x="6" y="19" font-size="12" fill="#444" font-family="Liberation Sans">7</text></svg>
<div style="left:1334.7px;top:150.2px;font-family:'Liberation Sans', sans-serif;font-size:14.5px;line-height:14.5px;color:#333333;font-weight:normal;white-space:nowrap;letter-spacing:0.67px;">Ngày</div>
<svg style="position:absolute;left:1374px;top:153.5px;" width="9" height="6" viewBox="0 0 9 6"><path d="M1 1L4.5 4.5L8 1" fill="none" stroke="#444" stroke-width="1.3"/></svg>
<div style="left:1428px;top:87px;width:1px;height:108px;background:#c8c8c8;"></div>
<svg style="position:absolute;left:1441px;top:87px;" width="20" height="22" viewBox="0 0 20 22"><path d="M5 1.5H16L19 4.5V20.5H5V14 M5 7V1.5" fill="none" stroke="#444" stroke-width="1.3"/><path d="M8 6H16M8 9.5H16M8 13H16" stroke="#666" stroke-width="1.1"/><path d="M4 7Q0 10 3 14H9M6.5 11.5L9 14L6.5 16.5" fill="none" stroke="#2a7ad4" stroke-width="1.5"/></svg>
<div style="left:1466.9px;top:92.2px;font-family:'Liberation Sans', sans-serif;font-size:14.5px;line-height:14.5px;color:#333333;font-weight:normal;white-space:nowrap;letter-spacing:0.48px;">Gộp cột</div>
<svg style="position:absolute;left:1523px;top:95.5px;" width="9" height="6" viewBox="0 0 9 6"><path d="M1 1L4.5 4.5L8 1" fill="none" stroke="#444" stroke-width="1.3"/></svg>
<svg style="position:absolute;left:1442px;top:117px;" width="21" height="20" viewBox="0 0 21 20"><rect x="1" y="1" width="19" height="18" fill="#fff" stroke="#444" stroke-width="1.5"/><path d="M2 18L19 2V18Z" fill="#4b9ce8"/><path d="M2 18L19 2" stroke="#333" stroke-width="1.2"/></svg>
<div style="left:1466.9px;top:121.2px;font-family:'Liberation Sans', sans-serif;font-size:14.5px;line-height:14.5px;color:#333333;font-weight:normal;white-space:nowrap;letter-spacing:0.50px;">Ẩn/Xóa dòng</div>
<svg style="position:absolute;left:1559px;top:124.5px;" width="9" height="6" viewBox="0 0 9 6"><path d="M1 1L4.5 4.5L8 1" fill="none" stroke="#444" stroke-width="1.3"/></svg>
<svg style="position:absolute;left:1442px;top:148px;" width="21" height="15" viewBox="0 0 21 15"><path d="M1 9Q10.5 -3 20 9" fill="none" stroke="#444" stroke-width="1.5"/><circle cx="10.5" cy="10" r="3.3" fill="none" stroke="#444" stroke-width="1.5"/></svg>
<div style="left:1466.9px;top:150.2px;font-family:'Liberation Sans', sans-serif;font-size:14.5px;line-height:14.5px;color:#333333;font-weight:normal;white-space:nowrap;letter-spacing:-0.04px;">Ẩn Sheet</div>
<svg style="position:absolute;left:1529px;top:153.5px;" width="9" height="6" viewBox="0 0 9 6"><path d="M1 1L4.5 4.5L8 1" fill="none" stroke="#444" stroke-width="1.3"/></svg>
<div style="left:1588px;top:86px;width:1px;height:109px;background:#c8c8c8;"></div>
<div style="left:1603px;top:86px;width:38px;height:36px;background:#fff;border:1px solid #555;"></div>
<svg style="position:absolute;left:1612px;top:94px;" width="22" height="22" viewBox="0 0 22 22"><path d="M2 20L13 9" stroke="#2a7ad4" stroke-width="1.6"/><path d="M13 2L14.3 6.5L18.5 8L14.3 9.5L13 14L11.7 9.5L7.5 8L11.7 6.5Z" fill="none" stroke="#2a7ad4" stroke-width="1.2"/><circle cx="17" cy="13" r="0.9" fill="#2a7ad4"/><circle cx="15" cy="17" r="0.8" fill="#2a7ad4"/></svg>
<svg style="position:absolute;left:1617px;top:159.5px;" width="9" height="6" viewBox="0 0 9 6"><path d="M1 1L4.5 4.5L8 1" fill="none" stroke="#444" stroke-width="1.3"/></svg>
<div style="left:1657px;top:86px;width:1px;height:109px;background:#c8c8c8;"></div>
<svg style="position:absolute;left:1673px;top:87px;" width="42" height="42" viewBox="0 0 42 42"><defs><clipPath id="kc"><circle cx="21" cy="21" r="20"/></clipPath></defs><circle cx="21" cy="21" r="20" fill="#1a8fae"/><path d="M14 26L28 40L45 30L36 12Z" fill="#136f8c" clip-path="url(#kc)"/><path d="M7 27L20 20L22 23L10 30Q6 31 7 27Z" fill="#f5c242"/><circle cx="27" cy="17" r="7" fill="#f5c242"/><circle cx="29" cy="15.5" r="2" fill="#136f8c"/></svg>
<div style="left:1679.8px;top:133.4px;font-family:'Liberation Sans', sans-serif;font-size:14.5px;line-height:14.5px;color:#333333;font-weight:normal;white-space:nowrap;letter-spacing:-0.25px;">Kích</div>
<div style="left:1671.8px;top:152.9px;font-family:'Liberation Sans', sans-serif;font-size:14.5px;line-height:14.5px;color:#333333;font-weight:normal;white-space:nowrap;letter-spacing:0.98px;">hoạt</div>
<svg style="position:absolute;left:1707px;top:156.5px;" width="9" height="6" viewBox="0 0 9 6"><path d="M1 1L4.5 4.5L8 1" fill="none" stroke="#444" stroke-width="1.3"/></svg>
<div style="left:1672.5px;top:184.7px;font-family:'Liberation Sans', sans-serif;font-size:12.8px;line-height:12.8px;color:#444;font-weight:normal;white-space:nowrap;">Ver 6.7</div>
<div style="left:1729px;top:86px;width:1px;height:109px;background:#c8c8c8;"></div>
<svg style="position:absolute;left:1896px;top:187px;" width="14" height="9" viewBox="0 0 14 9"><path d="M1.5 7.5L7 2L12.5 7.5" fill="none" stroke="#444" stroke-width="1.4"/></svg>
<div style="left:6px;top:213px;width:191px;height:28px;background:#fff;border:1px solid #c6c6c6;"></div>
<svg style="position:absolute;left:180px;top:225px;" width="12" height="7" viewBox="0 0 12 7"><path d="M1 1H11L6 6Z" fill="#666"/></svg>
<svg style="position:absolute;left:215px;top:220px;" width="5" height="14" viewBox="0 0 5 14"><rect x="1" y="0" width="3" height="3" fill="#999"/><rect x="1" y="5.5" width="3" height="3" fill="#999"/><rect x="1" y="11" width="3" height="3" fill="#999"/></svg>
<div style="left:236px;top:213px;width:1676px;height:28px;background:#fff;border:1px solid #c6c6c6;"></div>
<svg style="position:absolute;left:250px;top:221px;" width="17" height="15" viewBox="0 0 17 15"><path d="M1.5 1.5L15.5 13.5M15.5 1.5L1.5 13.5" stroke="#9a9a9a" stroke-width="1.6"/></svg>
<svg style="position:absolute;left:295px;top:221px;" width="19" height="15" viewBox="0 0 19 15"><path d="M1.5 8.5L6.5 13.5L17.5 1.5" fill="none" stroke="#9a9a9a" stroke-width="1.8"/></svg>
<svg style="position:absolute;left:1897px;top:223px;" width="13" height="8" viewBox="0 0 13 8"><path d="M1.5 1.5L6.5 6L11.5 1.5" fill="none" stroke="#bdbdbd" stroke-width="2"/></svg>
<svg style="position:absolute;left:18px;top:259px;" width="16" height="15" viewBox="0 0 16 15"><path d="M15 0V15H0Z" fill="#bdbdbd"/></svg>
<div style="left:167.8px;top:259.1px;font-family:'Liberation Sans', sans-serif;font-size:17px;line-height:17px;color:#222;font-weight:normal;white-space:nowrap;-webkit-text-stroke:0.35px #222;">A</div>
<div style="left:386.3px;top:259.1px;font-family:'Liberation Sans', sans-serif;font-size:17px;line-height:17px;color:#222;font-weight:normal;white-space:nowrap;-webkit-text-stroke:0.35px #222;">B</div>
<div style="left:637.4px;top:259.1px;font-family:'Liberation Sans', sans-serif;font-size:17px;line-height:17px;color:#222;font-weight:normal;white-space:nowrap;-webkit-text-stroke:0.35px #222;">C</div>
<div style="left:903.9px;top:259.1px;font-family:'Liberation Sans', sans-serif;font-size:17px;line-height:17px;color:#222;font-weight:normal;white-space:nowrap;-webkit-text-stroke:0.35px #222;">D</div>
<div style="left:1091.8px;top:259.1px;font-family:'Liberation Sans', sans-serif;font-size:17px;line-height:17px;color:#222;font-weight:normal;white-space:nowrap;-webkit-text-stroke:0.35px #222;">E</div>
<div style="left:1283.3px;top:259.1px;font-family:'Liberation Sans', sans-serif;font-size:17px;line-height:17px;color:#222;font-weight:normal;white-space:nowrap;-webkit-text-stroke:0.35px #222;">F</div>
<div style="left:1587.9px;top:259.1px;font-family:'Liberation Sans', sans-serif;font-size:17px;line-height:17px;color:#222;font-weight:normal;white-space:nowrap;-webkit-text-stroke:0.35px #222;">G</div>
<div style="left:1838.9px;top:259.1px;font-family:'Liberation Sans', sans-serif;font-size:17px;line-height:17px;color:#222;font-weight:normal;white-space:nowrap;-webkit-text-stroke:0.35px #222;">H</div>
<div style="left:13.8px;top:286.9px;font-family:'Liberation Sans', sans-serif;font-size:17px;line-height:17px;color:#222;font-weight:normal;white-space:nowrap;-webkit-text-stroke:0.35px #222;">1</div>
<div style="left:13.8px;top:316.9px;font-family:'Liberation Sans', sans-serif;font-size:17px;line-height:17px;color:#222;font-weight:normal;white-space:nowrap;-webkit-text-stroke:0.35px #222;">2</div>
<div style="left:13.8px;top:346.9px;font-family:'Liberation Sans', sans-serif;font-size:17px;line-height:17px;color:#222;font-weight:normal;white-space:nowrap;-webkit-text-stroke:0.35px #222;">3</div>
<div style="left:13.8px;top:376.9px;font-family:'Liberation Sans', sans-serif;font-size:17px;line-height:17px;color:#222;font-weight:normal;white-space:nowrap;-webkit-text-stroke:0.35px #222;">4</div>
<div style="left:13.8px;top:406.9px;font-family:'Liberation Sans', sans-serif;font-size:17px;line-height:17px;color:#222;font-weight:normal;white-space:nowrap;-webkit-text-stroke:0.35px #222;">5</div>
<div style="left:13.8px;top:436.9px;font-family:'Liberation Sans', sans-serif;font-size:17px;line-height:17px;color:#222;font-weight:normal;white-space:nowrap;-webkit-text-stroke:0.35px #222;">6</div>
<div style="left:13.8px;top:466.9px;font-family:'Liberation Sans', sans-serif;font-size:17px;line-height:17px;color:#222;font-weight:normal;white-space:nowrap;-webkit-text-stroke:0.35px #222;">7</div>
<div style="left:13.8px;top:496.9px;font-family:'Liberation Sans', sans-serif;font-size:17px;line-height:17px;color:#222;font-weight:normal;white-space:nowrap;-webkit-text-stroke:0.35px #222;">8</div>
<div style="left:13.8px;top:526.9px;font-family:'Liberation Sans', sans-serif;font-size:17px;line-height:17px;color:#222;font-weight:normal;white-space:nowrap;-webkit-text-stroke:0.35px #222;">9</div>
<div style="left:9.0px;top:556.9px;font-family:'Liberation Sans', sans-serif;font-size:17px;line-height:17px;color:#222;font-weight:normal;white-space:nowrap;-webkit-text-stroke:0.35px #222;">10</div>
<div style="left:9.7px;top:586.9px;font-family:'Liberation Sans', sans-serif;font-size:17px;line-height:17px;color:#222;font-weight:normal;white-space:nowrap;-webkit-text-stroke:0.35px #222;">11</div>
<div style="left:9.0px;top:616.9px;font-family:'Liberation Sans', sans-serif;font-size:17px;line-height:17px;color:#222;font-weight:normal;white-space:nowrap;-webkit-text-stroke:0.35px #222;">12</div>
<div style="left:9.0px;top:646.9px;font-family:'Liberation Sans', sans-serif;font-size:17px;line-height:17px;color:#222;font-weight:normal;white-space:nowrap;-webkit-text-stroke:0.35px #222;">13</div>
<div style="left:9.0px;top:676.9px;font-family:'Liberation Sans', sans-serif;font-size:17px;line-height:17px;color:#222;font-weight:normal;white-space:nowrap;-webkit-text-stroke:0.35px #222;">14</div>
<div style="left:9.0px;top:706.9px;font-family:'Liberation Sans', sans-serif;font-size:17px;line-height:17px;color:#222;font-weight:normal;white-space:nowrap;-webkit-text-stroke:0.35px #222;">15</div>
<div style="left:9.0px;top:736.9px;font-family:'Liberation Sans', sans-serif;font-size:17px;line-height:17px;color:#222;font-weight:normal;white-space:nowrap;-webkit-text-stroke:0.35px #222;">16</div>
<div style="left:9.0px;top:766.9px;font-family:'Liberation Sans', sans-serif;font-size:17px;line-height:17px;color:#222;font-weight:normal;white-space:nowrap;-webkit-text-stroke:0.35px #222;">17</div>
<div style="left:9.0px;top:796.9px;font-family:'Liberation Sans', sans-serif;font-size:17px;line-height:17px;color:#222;font-weight:normal;white-space:nowrap;-webkit-text-stroke:0.35px #222;">18</div>
<div style="left:9.0px;top:826.9px;font-family:'Liberation Sans', sans-serif;font-size:17px;line-height:17px;color:#222;font-weight:normal;white-space:nowrap;-webkit-text-stroke:0.35px #222;">19</div>
<div style="left:9.0px;top:856.9px;font-family:'Liberation Sans', sans-serif;font-size:17px;line-height:17px;color:#222;font-weight:normal;white-space:nowrap;-webkit-text-stroke:0.35px #222;">20</div>
<div style="left:9.0px;top:886.9px;font-family:'Liberation Sans', sans-serif;font-size:17px;line-height:17px;color:#222;font-weight:normal;white-space:nowrap;-webkit-text-stroke:0.35px #222;">21</div>
<div style="left:9.0px;top:916.9px;font-family:'Liberation Sans', sans-serif;font-size:17px;line-height:17px;color:#222;font-weight:normal;white-space:nowrap;-webkit-text-stroke:0.35px #222;">22</div>
<div style="left:9.0px;top:946.9px;font-family:'Liberation Sans', sans-serif;font-size:17px;line-height:17px;color:#222;font-weight:normal;white-space:nowrap;-webkit-text-stroke:0.35px #222;">23</div>
<div style="left:1898px;top:257px;width:17px;height:17px;background:#fff;border:1px solid #a6a6a6;box-sizing:border-box;"></div>
<svg style="position:absolute;left:1901px;top:261px;" width="12" height="8" viewBox="0 0 12 8"><path d="M1 7H11L6 1.5Z" fill="#222"/></svg>
<div style="left:1898px;top:276px;width:18px;height:648px;background:#fff;border:1px solid #a6a6a6;box-sizing:border-box;"></div>
<div style="left:1898px;top:924px;width:18px;height:32px;background:#f0f0f0;"></div>
<div style="left:1898px;top:956px;width:18px;height:18px;background:#fff;border:1px solid #a6a6a6;box-sizing:border-box;"></div>
<svg style="position:absolute;left:1901px;top:962px;" width="12" height="8" viewBox="0 0 12 8"><path d="M1 1H11L6 6.5Z" fill="#222"/></svg>
<div style="left:37px;top:278px;width:273px;height:29px;background:#ff3300;"></div>
<div style="left:39.1px;top:282.0px;font-family:'Liberation Serif', serif;font-size:22.7px;line-height:22.7px;color:#1a0500;font-weight:normal;white-space:nowrap;letter-spacing:-0.33px;">B6:C20,D6:D20,E6:E20</div>
<div style="left:814px;top:278px;width:193px;height:29px;background:#ffb000;"></div>
<div style="left:992.6px;top:282.0px;font-family:'Liberation Serif', serif;font-size:22.7px;line-height:22.7px;color:#000;font-weight:normal;white-space:nowrap;">0</div>
<div style="left:1161.7px;top:282.0px;font-family:'Liberation Serif', serif;font-size:22.7px;line-height:22.7px;color:#000;font-weight:normal;white-space:nowrap;">63</div>
<div style="left:1392.1px;top:312.0px;font-family:'Liberation Serif', serif;font-size:22.7px;line-height:22.7px;color:#000;font-weight:normal;white-space:nowrap;">-</div>
<div style="left:314.2px;top:344.5px;font-family:'Liberation Sans', sans-serif;font-size:19.5px;line-height:19.5px;color:#0563c1;font-weight:bold;white-space:nowrap;">Nhập liệu nhanh</div>
<div style="left:311px;top:398px;width:1489px;height:29px;background:#d0cece;"></div>
<div style="left:313.1px;top:402.0px;font-family:'Liberation Serif', serif;font-size:22.7px;line-height:22.7px;color:#000;font-weight:normal;white-space:nowrap;">Mã NV</div>
<div style="left:477.1px;top:402.0px;font-family:'Liberation Serif', serif;font-size:22.7px;line-height:22.7px;color:#000;font-weight:normal;white-space:nowrap;">Họ và tên</div>
<div style="left:816.1px;top:402.0px;font-family:'Liberation Serif', serif;font-size:22.7px;line-height:22.7px;color:#000;font-weight:normal;white-space:nowrap;">Phòng</div>
<div style="left:1010.6px;top:402.0px;font-family:'Liberation Serif', serif;font-size:22.7px;line-height:22.7px;color:#000;font-weight:bold;white-space:nowrap;letter-spacing:0.57px;">Mã Quê quán</div>
<div style="left:1191.6px;top:402.0px;font-family:'Liberation Serif', serif;font-size:22.7px;line-height:22.7px;color:#000;font-weight:normal;white-space:nowrap;letter-spacing:0.52px;">Tên Quê Quán</div>
<div style="left:1391.6px;top:402.0px;font-family:'Liberation Serif', serif;font-size:22.7px;line-height:22.7px;color:#000;font-weight:normal;white-space:nowrap;letter-spacing:0.48px;">Nhân Viên &amp; Phòng</div>
<div style="left:313.1px;top:432.0px;font-family:'Liberation Serif', serif;font-size:22.7px;line-height:22.7px;color:#000;font-weight:normal;white-space:nowrap;">NVA</div>
<div style="left:313.1px;top:462.0px;font-family:'Liberation Serif', serif;font-size:22.7px;line-height:22.7px;color:#000;font-weight:normal;white-space:nowrap;">NVB</div>
<div style="left:313.1px;top:492.0px;font-family:'Liberation Serif', serif;font-size:22.7px;line-height:22.7px;color:#000;font-weight:normal;white-space:nowrap;">HTT</div>
<div style="left:313.1px;top:522.0px;font-family:'Liberation Serif', serif;font-size:22.7px;line-height:22.7px;color:#000;font-weight:normal;white-space:nowrap;">NTT</div>
<div style="left:1161.7px;top:492.0px;font-family:'Liberation Serif', serif;font-size:22.7px;line-height:22.7px;color:#000;font-weight:normal;white-space:nowrap;">31</div>
<div style="left:1191.6px;top:492.0px;font-family:'Liberation Serif', serif;font-size:22.7px;line-height:22.7px;color:#000;font-weight:normal;white-space:nowrap;letter-spacing:0.12px;">Hưng Yên</div>
<div style="left:1161.7px;top:522.0px;font-family:'Liberation Serif', serif;font-size:22.7px;line-height:22.7px;color:#000;font-weight:normal;white-space:nowrap;">30</div>
<div style="left:1191.6px;top:522.0px;font-family:'Liberation Serif', serif;font-size:22.7px;line-height:22.7px;color:#000;font-weight:normal;white-space:nowrap;letter-spacing:0.25px;">Thành phố Hồ Chí Minh</div>
<div style="left:313.3px;top:552.0px;font-family:'Liberation Serif', serif;font-size:22.7px;line-height:22.7px;color:#000;font-weight:normal;white-space:nowrap;letter-spacing:0.09px;">NTD</div>
<div style="left:476.7px;top:552.0px;font-family:'Liberation Serif', serif;font-size:22.7px;line-height:22.7px;color:#000;font-weight:normal;white-space:nowrap;letter-spacing:0.47px;">Ngô Tiên Đông</div>
<div style="left:815.8px;top:552.0px;font-family:'Liberation Serif', serif;font-size:22.7px;line-height:22.7px;color:#000;font-weight:normal;white-space:nowrap;letter-spacing:0.34px;">Phòng Thời tiết</div>
<div style="left:1391.6px;top:552.0px;font-family:'Liberation Serif', serif;font-size:22.7px;line-height:22.7px;color:#000;font-weight:normal;white-space:nowrap;letter-spacing:0.33px;">Ngô Tiến Đông-Phòng Thời tiết</div>
<div style="left:313.3px;top:582.0px;font-family:'Liberation Serif', serif;font-size:22.7px;line-height:22.7px;color:#000;font-weight:normal;white-space:nowrap;letter-spacing:0.09px;">NDT</div>
<div style="left:476.7px;top:582.0px;font-family:'Liberation Serif', serif;font-size:22.7px;line-height:22.7px;color:#000;font-weight:normal;white-space:nowrap;letter-spacing:0.43px;">Nguyễn Đông Trang</div>
<div style="left:815.8px;top:582.0px;font-family:'Liberation Serif', serif;font-size:22.7px;line-height:22.7px;color:#000;font-weight:normal;white-space:nowrap;letter-spacing:0.34px;">Phòng Thời tiết</div>
<div style="left:1391.6px;top:582.0px;font-family:'Liberation Serif', serif;font-size:22.7px;line-height:22.7px;color:#000;font-weight:normal;white-space:nowrap;letter-spacing:0.31px;">Nguyễn Đông Trang-Phòng Thời tiết</div>
<div style="left:310px;top:397px;width:1px;height:481px;background:#000"></div>
<div style="left:474px;top:397px;width:1px;height:481px;background:#000"></div>
<div style="left:813px;top:397px;width:1px;height:481px;background:#000"></div>
<div style="left:1007px;top:397px;width:1px;height:481px;background:#000"></div>
<div style="left:1188px;top:397px;width:1px;height:481px;background:#000"></div>
<div style="left:1389px;top:397px;width:1px;height:120px;background:#000"></div>
<div style="left:1389px;top:547px;width:1px;height:331px;background:#000"></div>
<div style="left:1800px;top:397px;width:1px;height:481px;background:#000"></div>
<div style="left:310px;top:397px;width:1491px;height:1px;background:#000"></div>
<div style="left:310px;top:427px;width:1491px;height:1px;background:#000"></div>
<div style="left:310px;top:457px;width:1491px;height:1px;background:#000"></div>
<div style="left:310px;top:487px;width:1491px;height:1px;background:#000"></div>
<div style="left:310px;top:517px;width:1491px;height:1px;background:#000"></div>
<div style="left:310px;top:547px;width:1491px;height:1px;background:#000"></div>
<div style="left:310px;top:577px;width:1491px;height:1px;background:#000"></div>
<div style="left:310px;top:607px;width:1491px;height:1px;background:#000"></div>
<div style="left:310px;top:637px;width:1491px;height:1px;background:#000"></div>
<div style="left:310px;top:667px;width:1491px;height:1px;background:#000"></div>
<div style="left:310px;top:697px;width:1491px;height:1px;background:#000"></div>
<div style="left:310px;top:727px;width:1491px;height:1px;background:#000"></div>
<div style="left:310px;top:757px;width:1491px;height:1px;background:#000"></div>
<div style="left:310px;top:787px;width:1491px;height:1px;background:#000"></div>
<div style="left:310px;top:817px;width:1491px;height:1px;background:#000"></div>
<div style="left:310px;top:847px;width:1491px;height:1px;background:#000"></div>
<div style="left:310px;top:877px;width:1491px;height:1px;background:#000"></div>
<div style="left:474px;top:727px;width:338px;height:30px;background:#ececea;"></div>
<div style="left:791px;top:728px;width:21px;height:28px;background:#f0f0f0;border-right:2px solid #707070;border-bottom:2px solid #707070;box-sizing:border-box;"></div>
<svg style="position:absolute;left:796px;top:739px;" width="11" height="6" viewBox="0 0 11 6"><path d="M0 0H11L5.5 6Z" fill="#000"/></svg>
<svg style="position:absolute;left:26px;top:983px;" width="10" height="11" viewBox="0 0 10 11"><path d="M8 1V10L2 5.5Z" fill="#c4c4c4"/></svg>
<svg style="position:absolute;left:54px;top:983px;" width="10" height="11" viewBox="0 0 10 11"><path d="M2 1V10L8 5.5Z" fill="#c4c4c4"/></svg>
<div style="left:103px;top:978px;width:1px;height:21px;background:#9a9a9a;"></div>
<div style="left:204px;top:978px;width:1px;height:21px;background:#9a9a9a;"></div>
<div style="left:279px;top:978px;width:1px;height:21px;background:#9a9a9a;"></div>
<div style="left:115.3px;top:977.2px;font-family:'Liberation Sans', sans-serif;font-size:16.3px;line-height:16.3px;color:#444;font-weight:normal;white-space:nowrap;letter-spacing:0.64px;">NhanVien</div>
<div style="left:216.3px;top:977.2px;font-family:'Liberation Sans', sans-serif;font-size:16.3px;line-height:16.3px;color:#444;font-weight:normal;white-space:nowrap;letter-spacing:0.70px;">Phong</div>
<div style="left:290.8px;top:977.2px;font-family:'Liberation Sans', sans-serif;font-size:16.3px;line-height:16.3px;color:#444;font-weight:normal;white-space:nowrap;letter-spacing:0.48px;">Thanh Pho</div>
<div style="left:387px;top:974px;width:105px;height:25px;background:#fff;border-left:1px solid #a6a6a6;border-right:1px solid #a6a6a6;"></div>
<div style="left:387px;top:998px;width:106px;height:2px;background:#185f45;"></div>
<div style="left:399.1px;top:977.2px;font-family:'Liberation Sans', sans-serif;font-size:16.3px;line-height:16.3px;color:#1a5e40;font-weight:bold;white-space:nowrap;letter-spacing:0.30px;">Nhap Lieu</div>
<div style="left:494px;top:977px;width:94px;height:23px;background:#ff3300;"></div>
<div style="left:504.3px;top:977.2px;font-family:'Liberation Sans', sans-serif;font-size:16.3px;line-height:16.3px;color:#fff;font-weight:normal;white-space:nowrap;letter-spacing:0.10px;">CodeVBA</div>
<div style="left:590px;top:979px;width:1px;height:19px;background:#9a9a9a;"></div>
<svg style="position:absolute;left:623px;top:978px;" width="22" height="22" viewBox="0 0 22 22"><circle cx="11" cy="11" r="9.5" fill="none" stroke="#555" stroke-width="1.3"/><path d="M11 5.5V16.5M5.5 11H16.5" stroke="#555" stroke-width="1.5"/></svg>
<svg style="position:absolute;left:1148px;top:981px;" width="5" height="15" viewBox="0 0 5 15"><rect x="1" y="0" width="3" height="3" fill="#999"/><rect x="1" y="6" width="3" height="3" fill="#999"/><rect x="1" y="12" width="3" height="3" fill="#999"/></svg>
<div style="left:1167px;top:979px;width:728px;height:19px;background:#f0f0f0;"></div>
<div style="left:1167px;top:979px;width:19px;height:19px;background:#fff;border:1px solid #a6a6a6;box-sizing:border-box;"></div>
<svg style="position:absolute;left:1171px;top:983px;" width="8" height="11" viewBox="0 0 8 11"><path d="M7 0V11L1 5.5Z" fill="#222"/></svg>
<div style="left:1185px;top:979px;width:657px;height:19px;background:#fff;border:1px solid #a6a6a6;box-sizing:border-box;"></div>
<div style="left:1876px;top:979px;width:19px;height:19px;background:#fff;border:1px solid #a6a6a6;box-sizing:border-box;"></div>
<svg style="position:absolute;left:1882px;top:983px;" width="8" height="11" viewBox="0 0 8 11"><path d="M1 0V11L7 5.5Z" fill="#222"/></svg>
<div style="left:9.8px;top:1011.2px;font-family:'Liberation Sans', sans-serif;font-size:12.8px;line-height:12.8px;color:#555;font-weight:normal;white-space:nowrap;letter-spacing:-0.14px;">Ready</div>
<svg style="position:absolute;left:70px;top:1009px;" width="18" height="16" viewBox="0 0 18 16"><rect x="1" y="1" width="16" height="14" fill="none" stroke="#666" stroke-width="1.2"/><path d="M1 4H17M4 7H8M4 10H7M4 13H7" stroke="#666" stroke-width="1"/><circle cx="12" cy="10.5" r="3.5" fill="none" stroke="#666" stroke-width="1.2"/><circle cx="12" cy="10.5" r="1.5" fill="#666"/></svg>
<svg style="position:absolute;left:109px;top:1007px;" width="19" height="19" viewBox="0 0 19 19"><circle cx="8" cy="3" r="2" fill="none" stroke="#666" stroke-width="1.1"/><path d="M2 6L8 7L14 6 M8 7V11L4 17 M8 11L11 15 M11 11L18 18M18 11L11 18" fill="none" stroke="#666" stroke-width="1.2"/></svg>
<div style="left:132.0px;top:1011.2px;font-family:'Liberation Sans', sans-serif;font-size:12.8px;line-height:12.8px;color:#555;font-weight:normal;white-space:nowrap;letter-spacing:-0.05px;">Accessibility: Investigate</div>
<div style="left:1548px;top:1004px;width:50px;height:26px;background:#d9d9d9;"></div>
<svg style="position:absolute;left:1563px;top:1008px;" width="18" height="17" viewBox="0 0 18 17"><rect x="1" y="1" width="16" height="15" fill="none" stroke="#555" stroke-width="1.1"/><path d="M1 5.5H17M1 10.5H17M6.3 1V16M11.6 1V16" stroke="#555" stroke-width="1.1"/></svg>
<svg style="position:absolute;left:1613px;top:1008px;" width="18" height="17" viewBox="0 0 18 17"><rect x="1" y="1" width="16" height="15" fill="none" stroke="#555" stroke-width="1.1"/><rect x="4" y="4" width="10" height="9" fill="none" stroke="#555" stroke-width="1"/><path d="M6 7H12M6 9.5H12" stroke="#555" stroke-width="0.9"/></svg>
<svg style="position:absolute;left:1663px;top:1008px;" width="18" height="17" viewBox="0 0 18 17"><path d="M1 16V1H17V16 M7 1V8H11V1 M1 12H17" fill="none" stroke="#555" stroke-width="1.1"/></svg>
<div style="left:1705px;top:1016px;width:10px;height:1px;background:#555;"></div>
<div style="left:1721px;top:1016px;width:125px;height:1px;background:#888;"></div>
<div style="left:1781px;top:1010px;width:6px;height:14px;background:#444;"></div>
<svg style="position:absolute;left:1850px;top:1010px;" width="13" height="13" viewBox="0 0 13 13"><path d="M6.5 1V12M1 6.5H12" stroke="#555" stroke-width="1.2"/></svg>
<div style="left:1878.1px;top:1011.2px;font-family:'Liberation Sans', sans-serif;font-size:12.8px;line-height:12.8px;color:#555;font-weight:normal;white-space:nowrap;letter-spacing:-0.44px;">100%</div>
<svg style="position:absolute;left:20px;top:1044px;" width="21" height="21" viewBox="0 0 21 21"><path d="M0 3L9 1.6V9.8H0Z M10 1.4L21 0V9.8H10Z M0 11H9V19.4L0 18Z M10 11H21V21L10 19.6Z" fill="#fff"/></svg>
<svg style="position:absolute;left:79px;top:1045px;" width="22" height="20" viewBox="0 0 22 20"><path d="M1 1H14M1 19H14M3 4V16M12 4V16M3 4H12M3 16H12 M19 1V19" fill="none" stroke="#fff" stroke-width="1.3"/><rect x="17" y="8" width="4" height="4" fill="#fff"/></svg>
<svg style="position:absolute;left:139px;top:1042px;" width="29" height="24" viewBox="0 0 29 24"><path d="M1 3Q1 1 3 1H11L14 4H27Q28 4 28 5V22Q28 23 27 23H2Q1 23 1 22Z" fill="#f8c84a"/><path d="M1 7H28V22Q28 23 27 23H2Q1 23 1 22Z" fill="#fcdb74"/><path d="M8 23V14H21V23" fill="none" stroke="#2b86d8" stroke-width="3"/></svg>
<div style="left:129px;top:1077px;width:51px;height:3px;background:#76b9ed;"></div>
<svg style="position:absolute;left:200px;top:1041px;" width="30" height="29" viewBox="0 0 30 29"><path d="M9 7V4Q9 1 15 1Q21 1 21 4V7" fill="none" stroke="#2b86d8" stroke-width="2"/><rect x="1" y="6" width="28" height="22" rx="4" fill="#f4f4f4"/><rect x="10" y="12" width="4.5" height="4.5" fill="#f25022"/><rect x="15.5" y="12" width="4.5" height="4.5" fill="#7fba00"/><rect x="10" y="17.5" width="4.5" height="4.5" fill="#00a4ef"/><rect x="15.5" y="17.5" width="4.5" height="4.5" fill="#ffb900"/></svg>
<svg style="position:absolute;left:262px;top:1040px;" width="32" height="31" viewBox="0 0 32 31"><circle cx="16" cy="16" r="15" fill="#1e88d9"/><path d="M31 16Q31 4 18 2Q6 1 2 12Q8 6 16 8Q24 10 23 18Q28 22 31 16Z" fill="#54c26a"/><path d="M6 20Q8 12 16 13Q21 14 20 19Q15 19 12 22Q10 26 14 29Q7 27 6 20Z" fill="#0d5eb4"/></svg>
<svg style="position:absolute;left:324px;top:1041px;" width="31" height="29" viewBox="0 0 31 29"><path d="M1 11L15.5 1L30 11V28H1Z" fill="#0f64c8"/><path d="M1 11L15.5 21L30 11V28H1Z" fill="#2aa0f0"/><path d="M4 11L15.5 19L27 11L15.5 5Z" fill="#fff"/></svg>
<svg style="position:absolute;left:391px;top:1041px;" width="22" height="29" viewBox="0 0 22 29"><rect x="1" y="1" width="20" height="27" fill="#e8eef8" stroke="#9ab" stroke-width="1"/><rect x="3" y="4" width="16" height="3" fill="#f0a030"/><path d="M4 11H18M4 15H14M4 19H18M4 23H12" stroke="#3a6fc0" stroke-width="2"/></svg>
<div style="left:434px;top:1030px;width:56px;height:50px;background:#3b4b59;"></div>
<div style="left:434px;top:1077px;width:56px;height:3px;background:#76b9ed;"></div>
<svg style="position:absolute;left:447px;top:1041px;" width="31" height="29" viewBox="0 0 31 29"><rect x="8" y="1" width="22" height="27" rx="2" fill="#21a366"/><rect x="19" y="1" width="11" height="13" fill="#33c481"/><rect x="8" y="14" width="22" height="7" fill="#107c41"/><path d="M8 21H30V26Q30 28 28 28H10Q8 28 8 26Z" fill="#185c37"/><rect x="1" y="7" width="16" height="16" rx="1.5" fill="#107c41"/><path d="M5 11L13 19M13 11L5 19" stroke="#fff" stroke-width="2"/></svg>
<div style="left:491px;top:1034px;width:2px;height:42px;background:#2c3c4b;"></div>
<svg style="position:absolute;left:511px;top:1041px;" width="29" height="29" viewBox="0 0 29 29"><path d="M4 4H28V28H4Z" fill="#fff"/><path d="M2 2Q14 3 22 14Q26 22 25 27Q16 22 8 12Q4 7 2 2Z" fill="#2b6fd6"/><path d="M6 6Q14 10 22 25" stroke="#1b8a3a" stroke-width="1.2" fill="none"/></svg>
<svg style="position:absolute;left:573px;top:1041px;" width="30" height="30" viewBox="0 0 30 30"><rect x="0" y="0" width="30" height="30" rx="3" fill="#5a9e1a"/><path d="M22 8H11V22H22" fill="none" stroke="#e8f5c8" stroke-width="5"/></svg>
<svg style="position:absolute;left:637px;top:1041px;" width="29" height="29" viewBox="0 0 29 29"><circle cx="14.5" cy="14.5" r="11" fill="none" stroke="#d8d8d8" stroke-width="5"/><path d="M14.5 3.5A11 11 0 0 1 25.5 14.5" fill="none" stroke="#f0502a" stroke-width="5"/><path d="M4 19A11 11 0 0 1 6 7" fill="none" stroke="#555" stroke-width="5"/></svg>
<svg style="position:absolute;left:696px;top:1041px;" width="31" height="29" viewBox="0 0 31 29"><rect x="9" y="1" width="21" height="27" rx="2" fill="#1490df"/><rect x="9" y="14" width="21" height="14" fill="#28a8ea"/><rect x="1" y="7" width="16" height="16" rx="1.5" fill="#0a5ebd"/><ellipse cx="9" cy="15" rx="3.5" ry="4.5" fill="none" stroke="#fff" stroke-width="2"/></svg>
<svg style="position:absolute;left:760px;top:1041px;" width="28" height="28" viewBox="0 0 28 28"><circle cx="14" cy="14" r="13" fill="#111" stroke="#fff" stroke-width="1.5"/><circle cx="14" cy="14" r="8.5" fill="#f0402a"/></svg>
<div style="left:749px;top:1077px;width:51px;height:3px;background:#76b9ed;"></div>
<svg style="position:absolute;left:820px;top:1040px;" width="32" height="31" viewBox="0 0 32 31"><circle cx="16" cy="15.5" r="13" fill="none" stroke="#3b6fd0" stroke-width="3" stroke-dasharray="14 4"/><circle cx="16" cy="15.5" r="8" fill="#4a8ae8"/><circle cx="16" cy="14" r="3.5" fill="#bcd8ff"/></svg>
<div style="left:811px;top:1077px;width:52px;height:3px;background:#76b9ed;"></div>
<div style="left:1330.4px;top:1042.2px;font-family:'Liberation Sans', sans-serif;font-size:30px;line-height:30px;color:#fff;font-weight:bold;white-space:nowrap;letter-spacing:0.97px;">Tải MyExcel tại : www.myexcel.uk</div>
<div style="left:325px;top:176px;width:665px;height:377px;background:#fff;border:1px solid #c6c6c6;box-shadow:1px 2px 4px rgba(0,0,0,0.10);"></div>
<div style="left:326px;top:237px;width:664px;height:80px;background:#d1cfce;"></div>
<div style="left:494px;top:240px;width:50px;height:52px;border-radius:50%;background:radial-gradient(ellipse, rgba(230,215,120,0.32) 0%, rgba(230,215,120,0.25) 50%, rgba(230,215,120,0) 100%);"></div>
<svg style="position:absolute;left:343px;top:187px;" width="40" height="40" viewBox="0 0 40 40"><circle cx="20" cy="20" r="19.7" fill="#137fa1"/><path d="M8 12V27H19V29H21V27H32V12" fill="none" stroke="#fff" stroke-width="1.5"/><path d="M10 10V25Q15 24 19.5 26.5V12Q15 9.5 10 10Z M30 10V25Q25 24 20.5 26.5V12Q25 9.5 30 10Z" fill="#137fa1" stroke="#fff" stroke-width="1.5" stroke-linejoin="round"/></svg>
<div style="left:392.2px;top:203.1px;font-family:'Liberation Sans', sans-serif;font-size:15.2px;line-height:15.2px;color:#22222e;font-weight:bold;white-space:nowrap;letter-spacing:-0.37px;">Giới thiệu + Lưu ý khi sử dụng Tính năng nhập liệu nhanh với danh sách sổ xuống</div>
<svg style="position:absolute;left:348px;top:248px;" width="37" height="38" viewBox="0 0 37 38"><rect x="1.5" y="1.5" width="25" height="33" fill="#fbfbfb" stroke="#555" stroke-width="1.5"/><g fill="none" stroke="#666" stroke-width="1.2"><rect x="5.5" y="7.5" width="3.5" height="3.5"/><rect x="5.5" y="15.5" width="3.5" height="3.5"/><rect x="5.5" y="23.5" width="3.5" height="3.5"/></g><path d="M12 9H20M12 17H20M12 25H18" stroke="#666" stroke-width="1.3"/><path d="M34 19L26 28Q22 33 26 36Q30 37 31 33" fill="none" stroke="#2b8ae2" stroke-width="1.8"/><path d="M28 19H34.5V25.5" fill="none" stroke="#2b8ae2" stroke-width="1.8"/></svg>
<div style="left:392.2px;top:247.6px;font-family:'Liberation Sans', sans-serif;font-size:15.2px;line-height:15.2px;color:#22222e;font-weight:bold;white-space:nowrap;letter-spacing:0.14px;">Phím tắt (Ctrl+Shift+T)</div>
<div style="left:392.2px;top:272.3px;font-family:'Liberation Sans', sans-serif;font-size:14.3px;line-height:14.3px;color:#3a3a44;font-weight:normal;white-space:nowrap;letter-spacing:0.24px;">Bật / Tắt nhanh tính năng Nhập liệu nhanh</div>
<svg style="position:absolute;left:519px;top:264px;" width="14" height="26" viewBox="0 0 14 26"><path d="M1 1V20L5.5 15.5L9 24L12 22.5L8.5 14.5H13.5Z" fill="#fff" stroke="#000" stroke-width="1.1" stroke-linejoin="round"/></svg>
<svg style="position:absolute;left:349px;top:336px;" width="29" height="20" viewBox="0 0 29 20"><rect x="1" y="1" width="25" height="16" rx="1.5" fill="#f4f4f4" stroke="#444" stroke-width="1.2"/><path d="M3 18H27.5V3" fill="none" stroke="#333" stroke-width="2.2"/></svg>
<div style="left:392.7px;top:342.0px;font-family:'Liberation Sans', sans-serif;font-size:15.2px;line-height:15.2px;color:#22222e;font-weight:bold;white-space:nowrap;letter-spacing:-0.08px;">Thêm nút Bật / Tắt Nhập liệu Nhanh Trên Sheet</div>
<svg style="position:absolute;left:344px;top:387px;" width="38" height="37" viewBox="0 0 38 37"><rect x="1.5" y="1.5" width="34" height="33" fill="#fafafa" stroke="#666" stroke-width="1.5"/><rect x="1.5" y="1.5" width="34" height="4.5" fill="#999"/><path d="M1.5 13H35M1.5 20.5H30M1.5 28H18M12 6V34M23 6V22" stroke="#888" stroke-width="1.1"/><path d="M12 35L15 27L32 10Q35 8 36.5 10.5Q37.5 12.5 35.5 14L18 31Z" fill="#d6ebfb" stroke="#2b8ae2" stroke-width="1.5"/><path d="M12 35L15 27L18 31Z" fill="#2b8ae2"/></svg>
<div style="left:392.7px;top:400.4px;font-family:'Liberation Sans', sans-serif;font-size:15.2px;line-height:15.2px;color:#22222e;font-weight:bold;white-space:nowrap;letter-spacing:-0.43px;">Khai báo TEST vùng Nhập liệu</div>
<svg style="position:absolute;left:343px;top:445px;" width="38" height="38" viewBox="0 0 38 38"><g transform="rotate(45 19 19) translate(7 1)"><path d="M6 1H18V4.5H16V12L22 19.5V21H2V19.5L8 12V4.5H6Z" fill="#f7f7f7" stroke="#444" stroke-width="1.3" stroke-linejoin="round"/><path d="M12 21V36" stroke="#444" stroke-width="1.3"/></g></svg>
<div style="left:392.7px;top:460.0px;font-family:'Liberation Sans', sans-serif;font-size:15.2px;line-height:15.2px;color:#22222e;font-weight:bold;white-space:nowrap;letter-spacing:-0.36px;">File Mẫu</div>
<svg style="position:absolute;left:344px;top:509px;" width="38" height="27" viewBox="0 0 38 27"><rect x="0.5" y="0.5" width="37" height="26" rx="6" fill="#ff2d0a"/><path d="M14.5 7.5V19.5L25 13.5Z" fill="#fff"/></svg>
<div style="left:392.7px;top:518.1px;font-family:'Liberation Sans', sans-serif;font-size:15.2px;line-height:15.2px;color:#22222e;font-weight:bold;white-space:nowrap;letter-spacing:-0.31px;">Hướng dẫn chi tiết bằng Video</div>
</body></html>
